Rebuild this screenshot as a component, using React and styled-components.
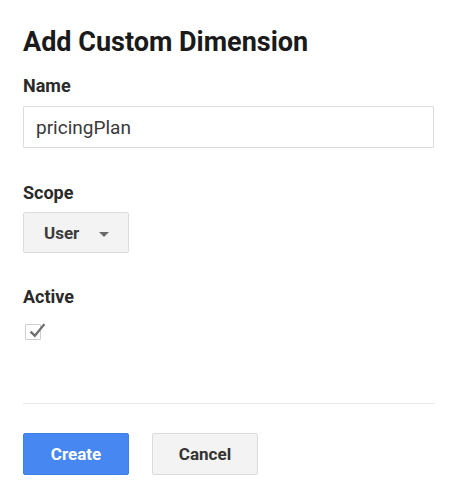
import React from "react";
import styled, { createGlobalStyle } from "styled-components";

const Global = createGlobalStyle`
  html, body { margin: 0; padding: 0; background: #fff; }
  body { font-family: Roboto, "Noto Sans", Arial, sans-serif; color: #222; }
`;

const Page = styled.div`
  width: 474px;
  height: 504px;
  box-sizing: border-box;
  padding: 26px 40px 0 23px;
  display: flex;
  flex-direction: column;
`;

const Title = styled.h1`
  margin: 0;
  font-size: 27px;
  line-height: 32px;
  font-weight: 700;
  color: #1a1a1a;
`;

const Field = styled.div`
  display: flex;
  flex-direction: column;
  align-items: flex-start;
  margin-top: ${(p) => p.$top}px;
`;

const Label = styled.label`
  font-size: 18px;
  line-height: 21px;
  font-weight: 700;
  color: #2a2a2a;
  margin-bottom: ${(p) => p.$gap ?? 10}px;
`;

const TextInput = styled.input`
  box-sizing: border-box;
  width: 411px;
  height: 42px;
  border: 1px solid #dcdcdc;
  border-radius: 1px;
  padding: 0 12px;
  font-family: Roboto, Arial, sans-serif;
  font-size: 19px;
  color: #3a3a3a;
  outline: none;
  background: #fff;
`;

const Button = styled.button`
  box-sizing: border-box;
  width: 106px;
  height: ${(p) => p.$h ?? 42}px;
  border-radius: 2px;
  font-family: Roboto, Arial, sans-serif;
  font-size: 17px;
  font-weight: 700;
  cursor: pointer;
  display: inline-flex;
  align-items: center;
  justify-content: center;
  border: 1px solid ${(p) => (p.$primary ? "#3f7fe8" : "#dcdcdc")};
  background: ${(p) => (p.$primary ? "#4787f2" : "#f3f3f3")};
  color: ${(p) => (p.$primary ? "#fff" : "#333")};
  padding: 0;
`;

const SelectButton = styled(Button)`
  justify-content: flex-start;
  padding-left: 20px;
  gap: 20px;
  color: #3c3c3c;
`;

const Caret = styled.span`
  width: 0;
  height: 0;
  border-left: 5px solid transparent;
  border-right: 5px solid transparent;
  border-top: 5px solid #6b6b6b;
  margin-top: 3px;
`;

const CheckBox = styled.span`
  position: relative;
  display: block;
  width: 16px;
  height: 16px;
  box-sizing: border-box;
  border: 1px solid #cfcfcf;
  border-radius: 1px;
  margin-left: 2px;
  background: #fff;
`;

const CheckMark = styled.svg`
  position: absolute;
  left: 3px;
  top: -3px;
`;

const Divider = styled.hr`
  margin: 63px 0 0;
  border: 0;
  border-top: 1px solid #e6e6e6;
  width: 411px;
`;

const Actions = styled.div`
  display: flex;
  gap: 23px;
  margin-top: 29px;
`;

export default function App() {
  return (
    <>
      <Global />
      <Page>
        <Title>Add Custom Dimension</Title>
        <Field $top={17}>
          <Label $gap={10}>Name</Label>
          <TextInput defaultValue="pricingPlan" />
        </Field>
        <Field $top={34}>
          <Label $gap={9}>Scope</Label>
          <SelectButton type="button" $h={41}>
            <span>User</span>
            <Caret />
          </SelectButton>
        </Field>
        <Field $top={33}>
          <Label $gap={17}>Active</Label>
          <CheckBox>
            <CheckMark width="17" height="17" viewBox="0 0 16 16">
              <path d="M1.5 9 L5.5 13 L14.5 2" fill="none" stroke="#6e6e6e" strokeWidth="2.2" />
            </CheckMark>
          </CheckBox>
        </Field>
        <Divider />
        <Actions>
          <Button type="button" $primary>Create</Button>
          <Button type="button">Cancel</Button>
        </Actions>
      </Page>
    </>
  );
}
